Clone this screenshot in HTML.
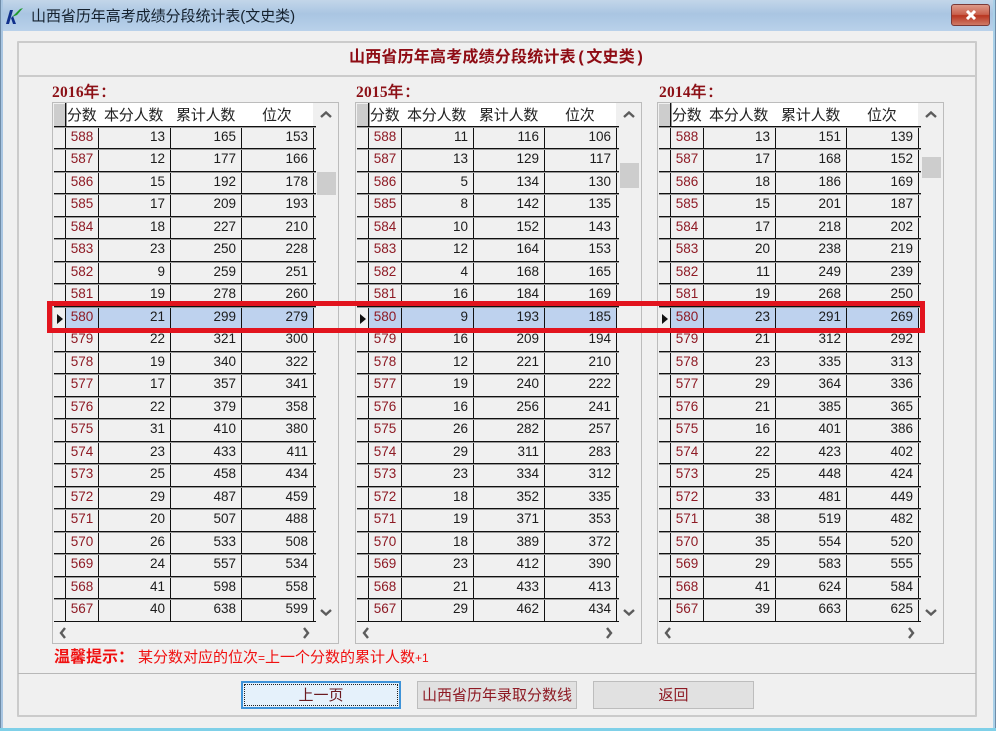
<!DOCTYPE html>
<html lang="zh"><head><meta charset="utf-8"><title>山西省历年高考成绩分段统计表(文史类)</title>
<style>
*{box-sizing:border-box;margin:0;padding:0}
html,body{width:996px;height:731px;overflow:hidden;background:#f0f0f0}
body{position:relative;font-family:"Liberation Sans","WenQuanYi Zen Hei","Noto Sans CJK SC",sans-serif;color:#1c1c1c}
.a{position:absolute}
#tb{left:0;top:0;width:996px;height:31px;background:linear-gradient(#c3d6e9,#a9c5e2 45%,#b9d1ea)}
#lf{left:0;top:0;width:3px;height:731px;background:#a9c6e2;border-left:1px solid #6f8ca8}
#rf{right:0;top:0;width:3px;height:731px;background:#a9d0e8;border-right:1px solid #6f8ca8}
#bf{left:0;top:728px;width:996px;height:3px;background:#7fd0e8}
#tt{left:31px;top:8px;font-size:15px;line-height:18px;white-space:nowrap;color:#15212e;letter-spacing:-.05px}
#cl{left:951px;top:4px;width:39px;height:22px;border:1px solid #7a3a38;border-radius:3px;background:linear-gradient(#dd9a8a,#c9604c 48%,#b8341f 52%,#cf7a66);}
#gb{left:17px;top:41px;width:960px;height:676px;border:2px solid #cbcbcb;border-radius:1px}
#l1{left:18px;top:75px;width:958px;height:2px;background:#cbcbcb}
#l2{left:18px;top:673px;width:958px;height:1px;background:#b8b8b8}
#hd{left:349px;top:48px;width:296px;font-size:16px;font-weight:bold;line-height:20px;color:#8e0c14;white-space:nowrap;letter-spacing:.2px}
#hd span{margin:0 2.5px}
.y{top:83px;font-family:"Liberation Serif","WenQuanYi Zen Hei",serif;font-size:15.5px;font-weight:bold;line-height:18px;color:#8c1016;white-space:nowrap;letter-spacing:.2px}
.y span{font-family:"Noto Sans CJK TC",sans-serif;font-size:14px;margin-left:1px}
.p{top:102px;width:287px;height:542px;border:1px solid #bcbcbc}
.p>*{position:absolute}
.ih{left:1px;top:1px;width:11px;height:23px;background:#cdcdcd}
.hh{left:12px;top:0;width:248px;height:23px;background:#fff;border-left:1px solid #111;box-shadow:inset 1px 0 0 #999}
.hh span{position:absolute;top:3px;font-size:15px;line-height:20px;white-space:nowrap;color:#222;letter-spacing:-.2px}
.rw{left:1px;width:262px;height:23px;border-top:1px solid #111;box-shadow:inset 0 1px 0 #999}
.rw b,.rw i{position:absolute;top:1px;height:22px;font:normal 13.5px/18px "Liberation Sans",sans-serif;border-right:1px solid #111;text-align:right;padding-right:5px}
.rw b{left:11px;width:34px;border-left:1px solid #111;text-align:center;padding:0;color:#8e1a24}
.rw i:nth-child(2){left:45px;width:72px}
.rw i:nth-child(3){left:117px;width:71px}
.rw i:nth-child(4){left:188px;width:72px}
.rw.s b,.rw.s i{background:#bed2ee}
.rw.s::before{content:"";position:absolute;left:3px;top:7px;border-left:6px solid #111;border-top:5px solid transparent;border-bottom:5px solid transparent}
.rw.e{border-bottom:1px solid #111;height:24px}
.rw.e b,.rw.e i{height:22px}
.th{left:264px;width:19px;background:#cdcdcd}
.p svg{fill:none;stroke:#5c5c5c;stroke-width:2.4}
#rd{left:47px;top:301px;width:878px;height:32px;border:5px solid #e2141e}
#tp1{left:54px;top:649px;font-size:16px;font-weight:bold;line-height:18px;color:#f01010;white-space:nowrap}
#tp2{left:138px;top:649px;font-size:15px;line-height:18px;color:#f01010;white-space:nowrap}
#tp2 span{font-size:12px}
.bt{top:681px;height:28px;font-size:15px;line-height:28px;text-align:center;color:#8e1a24;background:#e1e1e1;border:1px solid #bdbdbd;white-space:nowrap}
#b1{left:241px;width:160px;background:#e5f1fb;border:2px solid #3f93d8;line-height:26px;color:#6a1a20}
#b1 s{position:absolute;left:1px;top:1px;right:1px;bottom:1px;border:1px dotted #222}
</style></head><body>
<div class="a" id="tb"></div><div class="a" id="lf"></div><div class="a" id="rf"></div><div class="a" id="bf"></div>
<svg class="a" style="left:5px;top:7px" width="20" height="18" viewBox="0 0 20 18"><path d="M5 3H8L4 17H1Z" fill="#10308c"/><path d="M7 10L15 2L18 1L12 8Z" fill="#1f9a2c"/><path d="M8 9L11 17H8L6 11Z" fill="#10308c"/></svg>
<div class="a" id="tt">山西省历年高考成绩分段统计表(文史类)</div>
<div class="a" id="cl"><svg style="position:absolute;left:13px;top:5px" width="12" height="10" viewBox="0 0 12 10"><path d="M2 1L10 9M10 1L2 9" stroke="#fff" stroke-width="3" fill="none"/></svg></div>
<div class="a" id="gb"></div><div class="a" id="l1"></div><div class="a" id="l2"></div>
<div class="a" id="hd">山西省历年高考成绩分段统计表<span>(</span>文史类<span>)</span></div>

<div class="a y" style="left:52px">2016年<span>：</span></div>
<div class="a y" style="left:356px">2015年<span>：</span></div>
<div class="a y" style="left:659px">2014年<span>：</span></div>

<div class="a p" style="left:52px">
<div class="ih"></div><div class="hh"><span style="left:1px">分数</span><span style="left:38px">本分人数</span><span style="left:110px">累计人数</span><span style="left:196px">位次</span></div>
<div class="rw" style="top:23px"><b>588</b><i>13</i><i>165</i><i>153</i></div>
<div class="rw" style="top:45px"><b>587</b><i>12</i><i>177</i><i>166</i></div>
<div class="rw" style="top:68px"><b>586</b><i>15</i><i>192</i><i>178</i></div>
<div class="rw" style="top:90px"><b>585</b><i>17</i><i>209</i><i>193</i></div>
<div class="rw" style="top:113px"><b>584</b><i>18</i><i>227</i><i>210</i></div>
<div class="rw" style="top:135px"><b>583</b><i>23</i><i>250</i><i>228</i></div>
<div class="rw" style="top:158px"><b>582</b><i>9</i><i>259</i><i>251</i></div>
<div class="rw" style="top:180px"><b>581</b><i>19</i><i>278</i><i>260</i></div>
<div class="rw s" style="top:203px"><b>580</b><i>21</i><i>299</i><i>279</i></div>
<div class="rw" style="top:225px"><b>579</b><i>22</i><i>321</i><i>300</i></div>
<div class="rw" style="top:248px"><b>578</b><i>19</i><i>340</i><i>322</i></div>
<div class="rw" style="top:270px"><b>577</b><i>17</i><i>357</i><i>341</i></div>
<div class="rw" style="top:293px"><b>576</b><i>22</i><i>379</i><i>358</i></div>
<div class="rw" style="top:315px"><b>575</b><i>31</i><i>410</i><i>380</i></div>
<div class="rw" style="top:338px"><b>574</b><i>23</i><i>433</i><i>411</i></div>
<div class="rw" style="top:360px"><b>573</b><i>25</i><i>458</i><i>434</i></div>
<div class="rw" style="top:383px"><b>572</b><i>29</i><i>487</i><i>459</i></div>
<div class="rw" style="top:405px"><b>571</b><i>20</i><i>507</i><i>488</i></div>
<div class="rw" style="top:428px"><b>570</b><i>26</i><i>533</i><i>508</i></div>
<div class="rw" style="top:450px"><b>569</b><i>24</i><i>557</i><i>534</i></div>
<div class="rw" style="top:473px"><b>568</b><i>41</i><i>598</i><i>558</i></div>
<div class="rw e" style="top:495px"><b>567</b><i>40</i><i>638</i><i>599</i></div>
<div class="th" style="top:69px;height:23px"></div>
<svg style="left:267px;top:8px" width="12" height="8"><path d="M1 6L6 1.5L11 6"/></svg>
<svg style="left:267px;top:505px" width="12" height="8"><path d="M1 2L6 6.5L11 2"/></svg>
<svg style="left:6px;top:524px" width="8" height="12"><path d="M6 1L2 6L6 11"/></svg>
<svg style="left:249px;top:524px" width="8" height="12"><path d="M2 1L6 6L2 11"/></svg>
</div>

<div class="a p" style="left:355px">
<div class="ih"></div><div class="hh"><span style="left:1px">分数</span><span style="left:38px">本分人数</span><span style="left:110px">累计人数</span><span style="left:196px">位次</span></div>
<div class="rw" style="top:23px"><b>588</b><i>11</i><i>116</i><i>106</i></div>
<div class="rw" style="top:45px"><b>587</b><i>13</i><i>129</i><i>117</i></div>
<div class="rw" style="top:68px"><b>586</b><i>5</i><i>134</i><i>130</i></div>
<div class="rw" style="top:90px"><b>585</b><i>8</i><i>142</i><i>135</i></div>
<div class="rw" style="top:113px"><b>584</b><i>10</i><i>152</i><i>143</i></div>
<div class="rw" style="top:135px"><b>583</b><i>12</i><i>164</i><i>153</i></div>
<div class="rw" style="top:158px"><b>582</b><i>4</i><i>168</i><i>165</i></div>
<div class="rw" style="top:180px"><b>581</b><i>16</i><i>184</i><i>169</i></div>
<div class="rw s" style="top:203px"><b>580</b><i>9</i><i>193</i><i>185</i></div>
<div class="rw" style="top:225px"><b>579</b><i>16</i><i>209</i><i>194</i></div>
<div class="rw" style="top:248px"><b>578</b><i>12</i><i>221</i><i>210</i></div>
<div class="rw" style="top:270px"><b>577</b><i>19</i><i>240</i><i>222</i></div>
<div class="rw" style="top:293px"><b>576</b><i>16</i><i>256</i><i>241</i></div>
<div class="rw" style="top:315px"><b>575</b><i>26</i><i>282</i><i>257</i></div>
<div class="rw" style="top:338px"><b>574</b><i>29</i><i>311</i><i>283</i></div>
<div class="rw" style="top:360px"><b>573</b><i>23</i><i>334</i><i>312</i></div>
<div class="rw" style="top:383px"><b>572</b><i>18</i><i>352</i><i>335</i></div>
<div class="rw" style="top:405px"><b>571</b><i>19</i><i>371</i><i>353</i></div>
<div class="rw" style="top:428px"><b>570</b><i>18</i><i>389</i><i>372</i></div>
<div class="rw" style="top:450px"><b>569</b><i>23</i><i>412</i><i>390</i></div>
<div class="rw" style="top:473px"><b>568</b><i>21</i><i>433</i><i>413</i></div>
<div class="rw e" style="top:495px"><b>567</b><i>29</i><i>462</i><i>434</i></div>
<div class="th" style="top:60px;height:25px"></div>
<svg style="left:267px;top:8px" width="12" height="8"><path d="M1 6L6 1.5L11 6"/></svg>
<svg style="left:267px;top:505px" width="12" height="8"><path d="M1 2L6 6.5L11 2"/></svg>
<svg style="left:6px;top:524px" width="8" height="12"><path d="M6 1L2 6L6 11"/></svg>
<svg style="left:249px;top:524px" width="8" height="12"><path d="M2 1L6 6L2 11"/></svg>
</div>

<div class="a p" style="left:657px">
<div class="ih"></div><div class="hh"><span style="left:1px">分数</span><span style="left:38px">本分人数</span><span style="left:110px">累计人数</span><span style="left:196px">位次</span></div>
<div class="rw" style="top:23px"><b>588</b><i>13</i><i>151</i><i>139</i></div>
<div class="rw" style="top:45px"><b>587</b><i>17</i><i>168</i><i>152</i></div>
<div class="rw" style="top:68px"><b>586</b><i>18</i><i>186</i><i>169</i></div>
<div class="rw" style="top:90px"><b>585</b><i>15</i><i>201</i><i>187</i></div>
<div class="rw" style="top:113px"><b>584</b><i>17</i><i>218</i><i>202</i></div>
<div class="rw" style="top:135px"><b>583</b><i>20</i><i>238</i><i>219</i></div>
<div class="rw" style="top:158px"><b>582</b><i>11</i><i>249</i><i>239</i></div>
<div class="rw" style="top:180px"><b>581</b><i>19</i><i>268</i><i>250</i></div>
<div class="rw s" style="top:203px"><b>580</b><i>23</i><i>291</i><i>269</i></div>
<div class="rw" style="top:225px"><b>579</b><i>21</i><i>312</i><i>292</i></div>
<div class="rw" style="top:248px"><b>578</b><i>23</i><i>335</i><i>313</i></div>
<div class="rw" style="top:270px"><b>577</b><i>29</i><i>364</i><i>336</i></div>
<div class="rw" style="top:293px"><b>576</b><i>21</i><i>385</i><i>365</i></div>
<div class="rw" style="top:315px"><b>575</b><i>16</i><i>401</i><i>386</i></div>
<div class="rw" style="top:338px"><b>574</b><i>22</i><i>423</i><i>402</i></div>
<div class="rw" style="top:360px"><b>573</b><i>25</i><i>448</i><i>424</i></div>
<div class="rw" style="top:383px"><b>572</b><i>33</i><i>481</i><i>449</i></div>
<div class="rw" style="top:405px"><b>571</b><i>38</i><i>519</i><i>482</i></div>
<div class="rw" style="top:428px"><b>570</b><i>35</i><i>554</i><i>520</i></div>
<div class="rw" style="top:450px"><b>569</b><i>29</i><i>583</i><i>555</i></div>
<div class="rw" style="top:473px"><b>568</b><i>41</i><i>624</i><i>584</i></div>
<div class="rw e" style="top:495px"><b>567</b><i>39</i><i>663</i><i>625</i></div>
<div class="th" style="top:54px;height:21px"></div>
<svg style="left:267px;top:8px" width="12" height="8"><path d="M1 6L6 1.5L11 6"/></svg>
<svg style="left:267px;top:505px" width="12" height="8"><path d="M1 2L6 6.5L11 2"/></svg>
<svg style="left:6px;top:524px" width="8" height="12"><path d="M6 1L2 6L6 11"/></svg>
<svg style="left:249px;top:524px" width="8" height="12"><path d="M2 1L6 6L2 11"/></svg>
</div>

<div class="a" id="rd"></div>
<div class="a" id="tp1">温馨提示：</div>
<div class="a" id="tp2">某分数对应的位次<span>=</span>上一个分数的累计人数<span>+1</span></div>
<div class="a bt" id="b1"><s></s>上一页</div>
<div class="a bt" style="left:417px;width:160px">山西省历年录取分数线</div>
<div class="a bt" style="left:593px;width:161px;padding-right:0">返回</div>
</body></html>
